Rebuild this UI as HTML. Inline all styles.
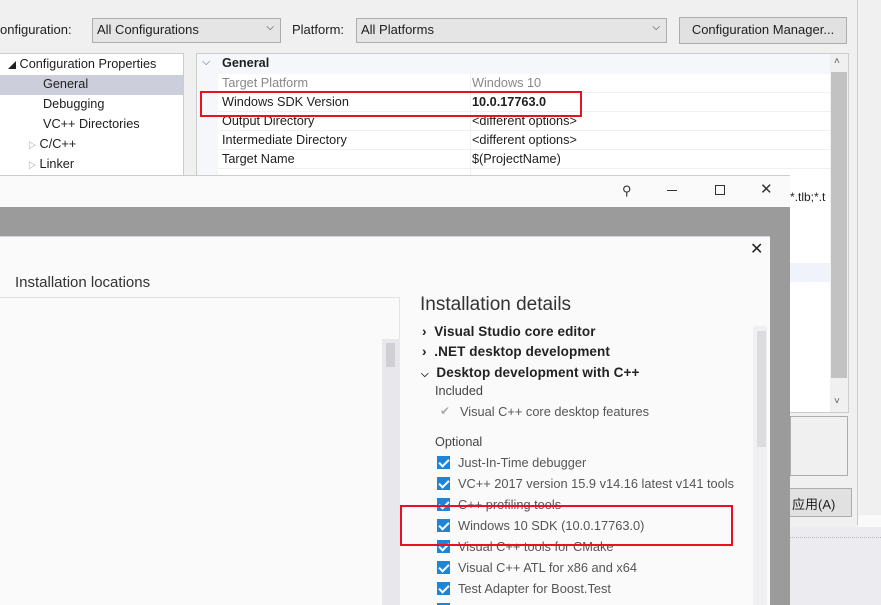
<!DOCTYPE html><html style="overflow:hidden"><head><style>
*{margin:0;padding:0;box-sizing:border-box}
html,body{width:881px;height:605px;overflow:hidden}
body{position:relative;background:#f0f0f0;font-family:"Segoe UI","Liberation Sans","Noto Sans CJK SC",sans-serif;font-size:12px;color:#1e1e1e}
.a{position:absolute}
.row{position:absolute;left:218px;width:612px;height:19px;border-bottom:1px solid #eef0f4;background:#fff;font-size:12.7px}
.row span{position:absolute;top:2px}
.it{position:absolute;left:435px;font-size:12.7px;color:#444}
.cb{position:absolute;left:437px;width:13px;height:13px;background:#1e84d6}
.cb:after{content:"";position:absolute;left:4px;top:1px;width:4px;height:8px;border:solid #fff;border-width:0 2px 2px 0;transform:rotate(45deg)}
.ck{position:absolute;left:458px;font-size:12.8px;color:#555}
</style></head><body>
<div class="a" style="left:0;top:0;width:858px;height:525px;background:#f0f0f0;border-right:1px solid #ccc"></div>
<div class="a" style="left:0;top:22px;font-size:13px">onfiguration:</div>
<div class="a" style="left:92px;top:18px;width:189px;height:25px;border:1px solid #adadad;background:#e5e5e5;padding:3px 4px;font-size:13px">All Configurations<span style="position:absolute;right:6px;top:3px;font-size:10px">⌵</span></div>
<div class="a" style="left:292px;top:22px;font-size:13px">Platform:</div>
<div class="a" style="left:356px;top:18px;width:311px;height:25px;border:1px solid #adadad;background:#e5e5e5;padding:3px 4px;font-size:13px">All Platforms<span style="position:absolute;right:6px;top:3px;font-size:10px">⌵</span></div>
<div class="a" style="left:679px;top:17px;width:168px;height:27px;border:1px solid #adadad;background:#e1e1e1;padding:4px 0;text-align:center;font-size:13px">Configuration Manager...</div>
<div class="a" style="left:0;top:53px;width:184px;height:130px;background:#fff;border:1px solid #ccc;border-left:0"></div>
<div class="a" style="left:8px;top:57px;font-size:12.7px"><span style="font-size:8px">◢</span> Configuration Properties</div>
<div class="a" style="left:0;top:75px;width:183px;height:20px;background:#cccedb"></div>
<div class="a" style="left:43px;top:77px;font-size:12.7px">General</div>
<div class="a" style="left:43px;top:97px;font-size:12.7px">Debugging</div>
<div class="a" style="left:43px;top:117px;font-size:12.7px">VC++ Directories</div>
<div class="a" style="left:28px;top:137px;font-size:12.7px"><span style="font-size:8px;color:#777">▷</span> C/C++</div>
<div class="a" style="left:28px;top:157px;font-size:12.7px"><span style="font-size:8px;color:#777">▷</span> Linker</div>
<div class="a" style="left:196px;top:53px;width:653px;height:360px;background:#fff;border:1px solid #ccc"></div>
<div class="a" style="left:197px;top:54px;width:633px;height:20px;background:#f5f7fa"></div>
<div class="a" style="left:202px;top:56px;font-size:11px;color:#555">⌵</div>
<div class="a" style="left:222px;top:56px;font-weight:bold;font-size:12.7px">General</div>
<div class="a" style="left:197px;top:74px;width:21px;height:338px;background:#f5f7fa"></div>
<div class="row" style="top:74px"><span style="left:4px;color:#888">Target Platform</span><span style="left:254px;color:#888">Windows 10</span></div>
<div class="row" style="top:93px"><span style="left:4px">Windows SDK Version</span><span style="left:254px;font-weight:bold">10.0.17763.0</span></div>
<div class="row" style="top:112px"><span style="left:4px">Output Directory</span><span style="left:254px">&lt;different options&gt;</span></div>
<div class="row" style="top:131px"><span style="left:4px">Intermediate Directory</span><span style="left:254px">&lt;different options&gt;</span></div>
<div class="row" style="top:150px"><span style="left:4px">Target Name</span><span style="left:254px">$(ProjectName)</span></div>
<div class="a" style="left:470px;top:74px;width:1px;height:110px;background:#eef0f4"></div>
<div class="a" style="left:790px;top:190px;font-size:12px">*.tlb;*.t</div>
<div class="a" style="left:790px;top:263px;width:40px;height:19px;background:#f0f4fa"></div>
<div class="a" style="left:830px;top:54px;width:18px;height:358px;background:#f0f0f0"></div>
<div class="a" style="left:831px;top:72px;width:16px;height:306px;background:#c2c2c2"></div>
<div class="a" style="left:834px;top:56px;font-size:10px;color:#555">˄</div>
<div class="a" style="left:834px;top:396px;font-size:10px;color:#555">˅</div>
<div class="a" style="left:790px;top:416px;width:58px;height:60px;border:1px solid #adadad;background:#f0f0f0"></div>
<div class="a" style="left:770px;top:488px;width:82px;height:29px;border:1px solid #adadad;background:#e1e1e1;padding:5px 0 0 21px;font-size:13px">应用(A)</div>
<div class="a" style="left:858px;top:515px;width:23px;height:12px;background:#fafafa"></div>
<div class="a" style="left:790px;top:527px;width:91px;height:78px;background:#ececf0"></div>
<div class="a" style="left:790px;top:537px;width:91px;border-top:1px dotted #bbb"></div>
<div class="a" style="left:0;top:175px;width:790px;height:430px;background:#fafafa;border-top:1px solid #ccc"></div>
<div class="a" style="left:622px;top:183px;font-size:13px;color:#333">⚲</div>
<div class="a" style="left:667px;top:190px;width:10px;height:1px;background:#333"></div>
<div class="a" style="left:715px;top:185px;width:10px;height:10px;border:1px solid #333"></div>
<div class="a" style="left:760px;top:180px;font-size:15px;color:#333">✕</div>
<div class="a" style="left:0;top:207px;width:790px;height:29px;background:#9b9b9b"></div>
<div class="a" style="left:770px;top:236px;width:20px;height:369px;background:#9b9b9b"></div>
<div class="a" style="left:0;top:236px;width:770px;height:1px;background:#d4d4e0"></div>
<div class="a" style="left:750px;top:239px;font-size:16px;color:#222">✕</div>
<div class="a" style="left:15px;top:274px;font-size:15px;color:#333">Installation locations</div>
<div class="a" style="left:0;top:297px;width:400px;height:320px;border:1px solid #e3e3e3;border-left:0;background:#fafafa"></div>
<div class="a" style="left:382px;top:339px;width:18px;height:266px;background:#e8e8ec"></div>
<div class="a" style="left:386px;top:343px;width:9px;height:24px;background:#cfcfd4"></div>
<div class="a" style="left:420px;top:294px;font-size:19px;color:#333">Installation details</div>
<div class="a" style="left:422px;top:324px;font-size:13.5px;font-weight:bold;color:#222;letter-spacing:.1px">›&nbsp; Visual Studio core editor</div>
<div class="a" style="left:422px;top:344px;font-size:13.5px;font-weight:bold;color:#222;letter-spacing:.1px">›&nbsp; .NET desktop development</div>
<div class="a" style="left:421px;top:365px;font-size:13.5px;font-weight:bold;color:#222;letter-spacing:.1px"><span style="font-size:10px">⌵</span>&nbsp; Desktop development with C++</div>
<div class="it" style="top:384px">Included</div>
<div class="a" style="left:440px;top:404px;color:#aaa">✔</div>
<div class="ck" style="top:404px;left:460px">Visual C++ core desktop features</div>
<div class="it" style="top:435px">Optional</div>
<div class="cb" style="top:456px"></div><div class="ck" style="top:455px">Just-In-Time debugger</div>
<div class="cb" style="top:477px"></div><div class="ck" style="top:476px">VC++ 2017 version 15.9 v14.16 latest v141 tools</div>
<div class="cb" style="top:498px"></div><div class="ck" style="top:497px">C++ profiling tools</div>
<div class="cb" style="top:519px"></div><div class="ck" style="top:518px">Windows 10 SDK (10.0.17763.0)</div>
<div class="cb" style="top:540px"></div><div class="ck" style="top:539px">Visual C++ tools for CMake</div>
<div class="cb" style="top:561px"></div><div class="ck" style="top:560px">Visual C++ ATL for x86 and x64</div>
<div class="cb" style="top:582px"></div><div class="ck" style="top:581px">Test Adapter for Boost.Test</div>
<div class="a" style="left:437px;top:603px;width:13px;height:2px;background:#1e84d6"></div>
<div class="a" style="left:753px;top:326px;width:14px;height:279px;background:#f0f0f2"></div>
<div class="a" style="left:757px;top:331px;width:9px;height:116px;background:#dcdcdf"></div>
<div class="a" style="left:200px;top:91px;width:382px;height:26px;border:2px solid #e81123"></div>
<div class="a" style="left:400px;top:505px;width:333px;height:41px;border:2px solid #e81123"></div>
</body></html>
